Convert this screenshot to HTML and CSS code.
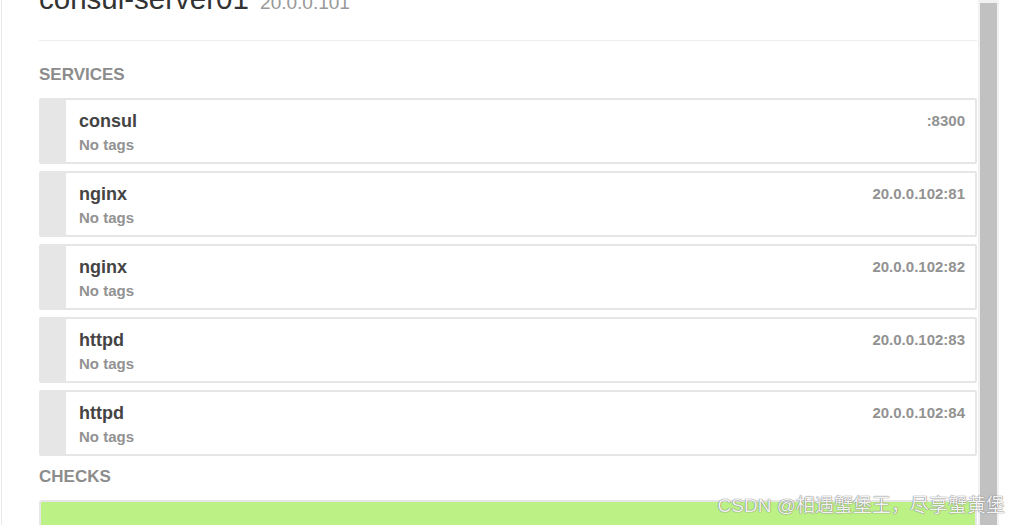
FILE: index.html
```html
<!DOCTYPE html>
<html lang="en">
<head>
    <meta charset="UTF-8">
    <meta name="viewport" content="width=device-width, initial-scale=1.0">
    <title>consul-server01 - Nodes</title>
    <link rel="stylesheet" href="styles.css">
</head>
<body>
  <div class="page">
    <div class="panel">
      <div class="node-header">
        <h1>consul-server01 <small>20.0.0.101</small></h1>
      </div>

      <div class="section services">
        <h5>Services</h5>
        <div class="list">
          <div class="service">
            <div class="bar"></div>
            <div class="info">
              <div class="name">consul</div>
              <div class="tags">No tags</div>
            </div>
            <div class="addr">:8300</div>
          </div>
          <div class="service">
            <div class="bar"></div>
            <div class="info">
              <div class="name">nginx</div>
              <div class="tags">No tags</div>
            </div>
            <div class="addr">20.0.0.102:81</div>
          </div>
          <div class="service">
            <div class="bar"></div>
            <div class="info">
              <div class="name">nginx</div>
              <div class="tags">No tags</div>
            </div>
            <div class="addr">20.0.0.102:82</div>
          </div>
          <div class="service">
            <div class="bar"></div>
            <div class="info">
              <div class="name">httpd</div>
              <div class="tags">No tags</div>
            </div>
            <div class="addr">20.0.0.102:83</div>
          </div>
          <div class="service">
            <div class="bar"></div>
            <div class="info">
              <div class="name">httpd</div>
              <div class="tags">No tags</div>
            </div>
            <div class="addr">20.0.0.102:84</div>
          </div>
        </div>
      </div>

      <div class="section checks">
        <h5>Checks</h5>
        <div class="check passing"></div>
      </div>
    </div>

    <div class="scrollbar">
      <div class="thumb"></div>
    </div>
  </div>

  <div class="watermark">CSDN @相遇蟹堡王，尽享蟹黄堡</div>
</body>
</html>
```

FILE: styles.css
```css
html, body {
  height: 100%;
}

body {
  margin: 0;
  font-family: "Liberation Sans", Arial, sans-serif;
  background: #fff;
  color: #444;
  overflow: hidden;
}

.page {
  display: flex;
  height: 100%;
  margin-left: 1px;
}

.panel {
  width: 938px;
  padding-left: 37px;
  border-left: 1px solid #e8e8e8;
}

.node-header {
  margin-top: -17px;
  padding-bottom: 25px;
  border-bottom: 1px solid #eeeeee;
}

.node-header h1 {
  margin: 0;
  height: 32px;
  font-size: 29.5px;
  line-height: 32px;
  font-weight: normal;
  color: #333;
}

.node-header small {
  margin-left: 3px;
  font-size: 19px;
  line-height: 0;
  color: #999;
}

.section h5 {
  margin: 0 0 13px;
  font-size: 17px;
  line-height: 20px;
  font-weight: bold;
  text-transform: uppercase;
  color: #8c8c8c;
}

.services {
  margin-top: 24px;
}

.checks {
  margin-top: 11px;
}

.list {
  display: flex;
  flex-direction: column;
  gap: 7px;
}

.service {
  display: flex;
  height: 62px;
  border: 2px solid #e6e6e6;
  border-radius: 2px;
}

.service .bar {
  width: 25px;
  background: #e6e6e6;
}

.service .info {
  flex: 1;
  padding: 10px 0 0 13px;
}

.service .name {
  font-size: 18px;
  line-height: 22px;
  font-weight: bold;
  color: #444;
}

.service .tags {
  margin-top: 4px;
  font-size: 15px;
  line-height: 18px;
  font-weight: bold;
  color: #929292;
}

.service .addr {
  padding: 10px 10px 0 0;
  font-size: 15px;
  line-height: 22px;
  font-weight: bold;
  color: #929292;
}

.check {
  height: 60px;
  border: 2px solid #e6e6e6;
  border-radius: 3px;
}

.check.passing {
  background: #bcf186;
}

.scrollbar {
  width: 17px;
  padding: 3px 2px 0;
  margin-left: 1px;
  background: #f1f1f1;
}

.scrollbar .thumb {
  height: 100%;
  background: #c1c1c1;
}

.watermark {
  position: absolute;
  right: 17px;
  bottom: 8px;
  font-family: "Liberation Sans", "Noto Sans CJK SC", sans-serif;
  font-size: 19px;
  color: rgba(255, 255, 255, 0.92);
  text-shadow: 0 0 1px #777, 0 0 1px #777;
}
```
